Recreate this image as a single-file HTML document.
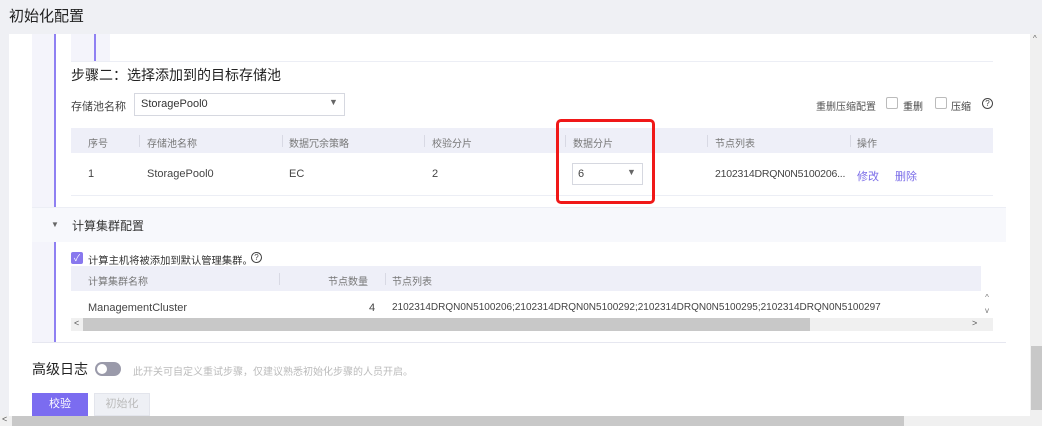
<!DOCTYPE html><html><head><meta charset="utf-8"><style>
*{margin:0;padding:0;box-sizing:border-box}
body{width:1042px;height:426px;overflow:hidden;background:#eff0f4;font-family:"Liberation Sans","Noto Sans CJK SC",sans-serif;color:#444;position:relative;font-size:12px}
.a{position:absolute;white-space:nowrap}
.th{color:#777;font-size:10px}
</style></head><body>
<div class="a" style="left:9px;top:5px;font-size:15px;color:#222">初始化配置</div>
<div class="a" style="left:9px;top:34px;width:1021px;height:382px;background:#fff"></div>
<div class="a" style="left:32px;top:34px;width:22px;height:308px;background:#f4f4fb"></div>
<div class="a" style="left:54px;top:34px;width:2px;height:174px;background:#8f80f2"></div>
<div class="a" style="left:71px;top:34px;width:39px;height:28px;background:#f4f4fb"></div>
<div class="a" style="left:94px;top:34px;width:2px;height:28px;background:#8f80f2"></div>
<div class="a" style="left:71px;top:61px;width:922px;height:1px;background:#eceef5"></div>
<div class="a" style="left:71px;top:65px;font-size:14px;color:#222">步骤二：选择添加到的目标存储池</div>
<div class="a" style="left:71px;top:98px;font-size:11px;color:#444">存储池名称</div>
<div class="a" style="left:134px;top:93px;width:211px;height:23px;border:1px solid #d6d8e0;background:#fff"><span class="a" style="left:6px;top:4px;font-size:11px;color:#333">StoragePool0</span><span class="a" style="left:194px;top:3px;font-size:9px;color:#666">▼</span></div>
<div class="a" style="left:816px;top:98px;font-size:10px;color:#555">重删压缩配置</div>
<div class="a" style="left:886px;top:97px;width:12px;height:12px;border:1px solid #bbb;border-radius:2px"></div>
<div class="a" style="left:903px;top:98px;font-size:10px;color:#444">重删</div>
<div class="a" style="left:935px;top:97px;width:12px;height:12px;border:1px solid #bbb;border-radius:2px"></div>
<div class="a" style="left:951px;top:98px;font-size:10px;color:#444">压缩</div>
<div class="a" style="left:982px;top:98px;width:11px;height:11px;border:1px solid #444;border-radius:50%;font-size:8px;line-height:9px;text-align:center">?</div>
<div class="a" style="left:71px;top:128px;width:922px;height:25px;background:#eeeff8"></div>
<div class="a th" style="left:88px;top:135px">序号</div>
<div class="a th" style="left:147px;top:135px">存储池名称</div>
<div class="a th" style="left:289px;top:135px">数据冗余策略</div>
<div class="a th" style="left:432px;top:135px">校验分片</div>
<div class="a th" style="left:573px;top:135px">数据分片</div>
<div class="a th" style="left:715px;top:135px">节点列表</div>
<div class="a th" style="left:857px;top:135px">操作</div>
<div class="a" style="left:139px;top:135px;width:1px;height:12px;background:#d8d9e4"></div>
<div class="a" style="left:282px;top:135px;width:1px;height:12px;background:#d8d9e4"></div>
<div class="a" style="left:424px;top:135px;width:1px;height:12px;background:#d8d9e4"></div>
<div class="a" style="left:565px;top:135px;width:1px;height:12px;background:#d8d9e4"></div>
<div class="a" style="left:707px;top:135px;width:1px;height:12px;background:#d8d9e4"></div>
<div class="a" style="left:850px;top:135px;width:1px;height:12px;background:#d8d9e4"></div>
<div class="a" style="left:88px;top:168px;font-size:11px">1</div>
<div class="a" style="left:147px;top:168px;font-size:11px">StoragePool0</div>
<div class="a" style="left:289px;top:168px;font-size:11px">EC</div>
<div class="a" style="left:432px;top:168px;font-size:11px">2</div>
<div class="a" style="left:572px;top:163px;width:71px;height:22px;border:1px solid #d6d8e0"><span class="a" style="left:5px;top:4px;font-size:11px">6</span><span class="a" style="left:54px;top:3px;font-size:9px;color:#666">▼</span></div>
<div class="a" style="left:715px;top:168px;font-size:10.5px;letter-spacing:-0.2px">2102314DRQN0N5100206...</div>
<div class="a" style="left:857px;top:168px;color:#7a6ce8;font-size:11px">修改</div>
<div class="a" style="left:895px;top:168px;color:#7a6ce8;font-size:11px">删除</div>
<div class="a" style="left:71px;top:195px;width:922px;height:1px;background:#eceef5"></div>
<div class="a" style="left:556px;top:119px;width:99px;height:85px;border:3px solid #f01818;border-radius:5px"></div>
<div class="a" style="left:32px;top:207px;width:974px;height:35px;background:#f7f8fc;border-top:1px solid #eceef5"></div>
<div class="a" style="left:51px;top:220px;font-size:8px;color:#666">▼</div>
<div class="a" style="left:72px;top:217px;font-size:12px;color:#333">计算集群配置</div>
<div class="a" style="left:54px;top:242px;width:2px;height:100px;background:#8f80f2"></div>
<div class="a" style="left:71px;top:252px;width:12px;height:12px;background:#8878ee;border-radius:2px;color:#fff;font-size:9px;line-height:12px;text-align:center">✓</div>
<div class="a" style="left:88px;top:252px;font-size:10.3px;color:#333">计算主机将被添加到默认管理集群。</div>
<div class="a" style="left:251px;top:252px;width:11px;height:11px;border:1px solid #444;border-radius:50%;font-size:8px;line-height:9px;text-align:center">?</div>
<div class="a" style="left:71px;top:266px;width:910px;height:25px;background:#eeeff8"></div>
<div class="a th" style="left:88px;top:273px">计算集群名称</div>
<div class="a th" style="left:328px;top:273px">节点数量</div>
<div class="a th" style="left:392px;top:273px">节点列表</div>
<div class="a" style="left:279px;top:273px;width:1px;height:12px;background:#d8d9e4"></div>
<div class="a" style="left:385px;top:273px;width:1px;height:12px;background:#d8d9e4"></div>
<div class="a" style="left:88px;top:302px;font-size:11px">ManagementCluster</div>
<div class="a" style="left:369px;top:302px;font-size:11px">4</div>
<div class="a" style="left:392px;top:302px;font-size:10px">2102314DRQN0N5100206;2102314DRQN0N5100292;2102314DRQN0N5100295;2102314DRQN0N5100297</div>
<div class="a" style="left:981px;top:291px;width:12px;height:27px;background:#fff;font-size:8px;color:#777;text-align:center;line-height:13px">^<br>v</div>
<div class="a" style="left:71px;top:318px;width:922px;height:13px;background:#f0f0f0"></div>
<div class="a" style="left:83px;top:318px;width:727px;height:13px;background:#c8c8c8"></div>
<div class="a" style="left:74px;top:318px;font-size:9px;color:#555">&lt;</div>
<div class="a" style="left:972px;top:318px;font-size:9px;color:#555">&gt;</div>
<div class="a" style="left:32px;top:342px;width:974px;height:1px;background:#e6e7f0"></div>
<div class="a" style="left:32px;top:359px;font-size:14px;color:#222">高级日志</div>
<div class="a" style="left:95px;top:362px;width:26px;height:14px;background:#9a9aaa;border-radius:7px"><div class="a" style="left:2px;top:2px;width:10px;height:10px;border-radius:50%;background:#fff"></div></div>
<div class="a" style="left:133px;top:363px;font-size:10px;color:#bbb">此开关可自定义重试步骤，仅建议熟悉初始化步骤的人员开启。</div>
<div class="a" style="left:32px;top:393px;width:56px;height:23px;background:#7b6cf0;color:#fff;text-align:center;line-height:23px;font-size:11px">校验</div>
<div class="a" style="left:94px;top:393px;width:56px;height:23px;background:#eef0f5;border:1px solid #e3e5ec;color:#bbb;text-align:center;line-height:21px;font-size:11px">初始化</div>
<div class="a" style="left:0;top:416px;width:1030px;height:10px;background:#f0f0f0"></div>
<div class="a" style="left:12px;top:416px;width:892px;height:10px;background:#c8c8c8"></div>
<div class="a" style="left:2px;top:414px;font-size:9px;color:#555">&lt;</div>
<div class="a" style="left:1030px;top:34px;width:12px;height:392px;background:#f0f0f0"></div>
<div class="a" style="left:1031px;top:346px;width:11px;height:64px;background:#c8c8c8"></div>
<div class="a" style="left:1033px;top:34px;font-size:8px;color:#666">^</div>
</body></html>
